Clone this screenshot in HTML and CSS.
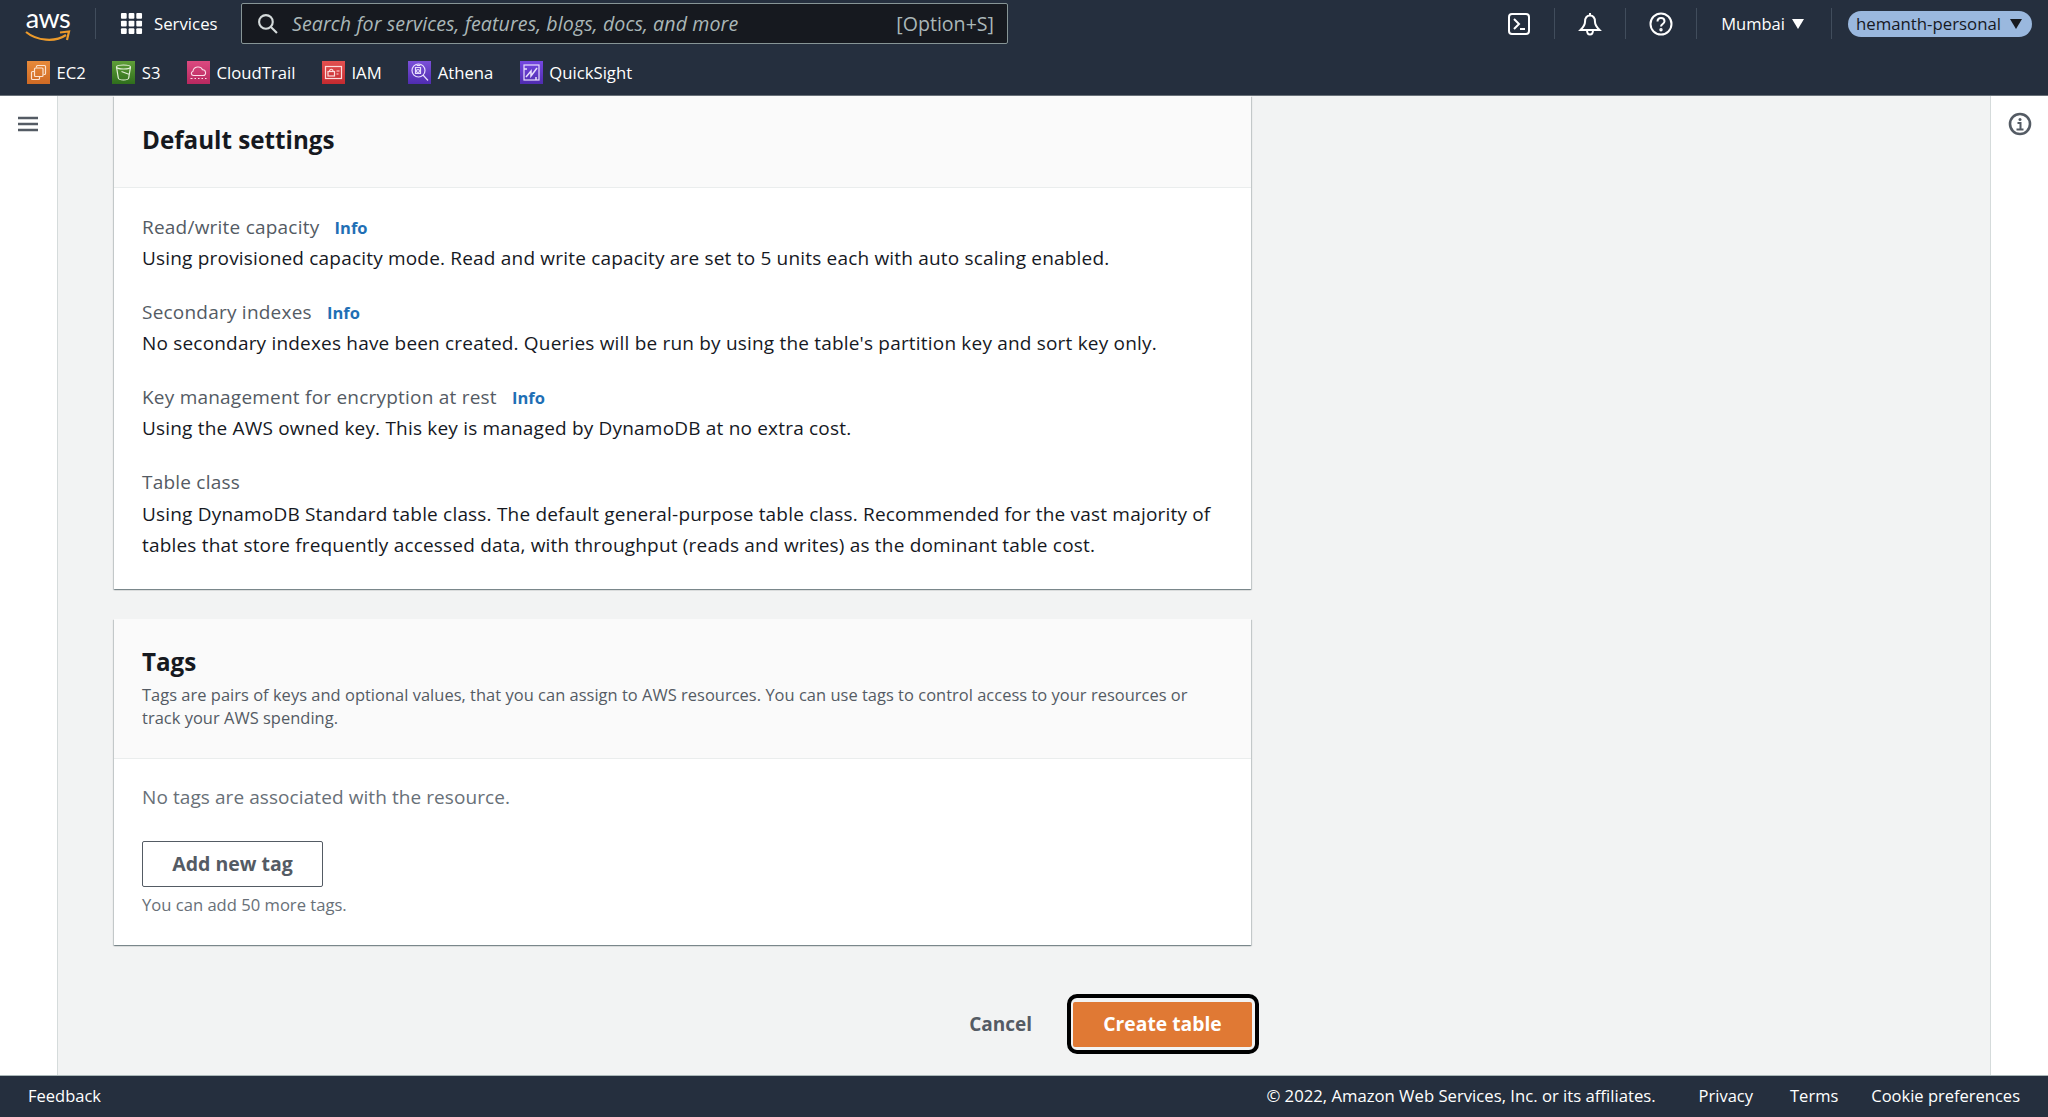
FILE: index.html
```html
<!DOCTYPE html>
<html lang="en">
<head>
<meta charset="utf-8">
<title>Create table</title>
<link rel="stylesheet" href="styles.css">
</head>
<body>
<header class="top">
  <div class="bar">
    <div class="logo"><span class="logo-text">aws</span>
      <svg class="smile" viewBox="0 0 46 14" width="46" height="14"><path d="M1 2C12 11 30 12.500 41 5" fill="none" stroke="#ec9a2b" stroke-width="2.200"/><path d="M35 2.500L44 1.500L42 10" fill="none" stroke="#ec9a2b" stroke-width="2.200"/></svg>
    </div>
    <span class="sep logo-sep"></span>
    <svg class="grid-ic" viewBox="0 0 24 24" width="23" height="23" fill="#fff"><rect x="1" y="1" width="6" height="6" rx="1"/><rect x="9" y="1" width="6" height="6" rx="1"/><rect x="17" y="1" width="6" height="6" rx="1"/><rect x="1" y="9" width="6" height="6" rx="1"/><rect x="9" y="9" width="6" height="6" rx="1"/><rect x="17" y="9" width="6" height="6" rx="1"/><rect x="1" y="17" width="6" height="6" rx="1"/><rect x="9" y="17" width="6" height="6" rx="1"/><rect x="17" y="17" width="6" height="6" rx="1"/></svg>
    <span class="services">Services</span>
    <div class="search">
      <svg viewBox="0 0 20 20" width="21" height="21" fill="none" stroke="#d5dbdb" stroke-width="2"><circle cx="8.5" cy="8.5" r="6.5"/><path d="M13 13l6 6"/></svg>
      <span class="search-text">Search for services, features, blogs, docs, and more</span>
      <span class="shortcut">[Option+S]</span>
    </div>
    <div class="tools">
      <span class="tool"><svg viewBox="0 0 24 24" width="24" height="24" fill="none" stroke="#fff" stroke-width="2"><rect x="2" y="2" width="20" height="20" rx="3"/><path d="M7 7l5 5-5 5M13 17h5"/></svg></span>
      <span class="sep"></span>
      <span class="tool"><svg viewBox="0 0 24 24" width="24" height="24" fill="none" stroke="#fff" stroke-width="2"><path d="M12 3.500c-3.500 0-5 3-5 6.500 0 3.500-2 5.500-4.500 8h19c-2.500-2.500-4.500-4.500-4.500-8 0-3.500-1.500-6.500-5-6.500zM12 1v2.500M9 18c0 3 1.500 4.500 3 4.500s3-1.500 3-4.500"/></svg></span>
      <span class="sep"></span>
      <span class="tool"><svg viewBox="0 0 24 24" width="24" height="24" fill="none" stroke="#fff" stroke-width="2"><circle cx="12" cy="12" r="10.500"/><path d="M8.500 9.500c0-2 1.500-3.500 3.500-3.500s3.500 1.300 3.500 3.300c0 2.700-3.500 2.700-3.500 5.200"/><circle cx="12" cy="17.800" r=".7"/></svg></span>
      <span class="sep"></span>
      <span class="region">Mumbai <i class="caret"></i></span>
      <span class="sep"></span>
      <span class="account">hemanth-personal <i class="caret dark"></i></span>
    </div>
  </div>
  <nav class="favs">
    <a class="fav"><span class="svc orange"><svg viewBox="0 0 23 23" fill="none" stroke="#fbe3d0" stroke-width="1.200"><path d="M9.500 6.500V5.500a1 1 0 0 1 1-1h7a1 1 0 0 1 1 1v7a1 1 0 0 1-1 1h-1"/><rect x="7.500" y="7" width="8.500" height="8.500" rx="1"/><path d="M7.500 10.500h-2a1 1 0 0 0-1 1v6a1 1 0 0 0 1 1h6a1 1 0 0 0 1-1v-2"/></svg></span>EC2</a>
    <a class="fav"><span class="svc green"><svg viewBox="0 0 23 23" fill="none" stroke="#e3f0d8" stroke-width="1.200"><ellipse cx="11.500" cy="6" rx="7" ry="2"/><path d="M4.500 6l1.800 11c.3 1.500 2.500 2 5.200 2s4.900-.5 5.200-2l1.800-11M9.500 10.500l8 3"/></svg></span>S3</a>
    <a class="fav"><span class="svc pink"><svg viewBox="0 0 23 23" fill="none" stroke="#fbdde8" stroke-width="1.100"><path d="M6.500 14.500c-2.500 0-3-3.500-.5-4.300.5-4.500 7.500-6 9.500-1.500 3.500-.3 4.500 5.800.5 5.800z"/><path d="M3.500 17.500h2M7.500 17.500h1.500M11 17.500h1.500M14.500 17.500h1.500M18 17.500h1.500"/></svg></span>CloudTrail</a>
    <a class="fav"><span class="svc red"><svg viewBox="0 0 23 23" fill="none" stroke="#fbdcdc" stroke-width="1.200"><rect x="3.500" y="5.500" width="16" height="12"/><rect x="6" y="10.500" width="6.500" height="4.500"/><path d="M7.500 10.500c0-3 3.500-3 3.500 0M14.500 10h3M14.500 13h2"/></svg></span>IAM</a>
    <a class="fav"><span class="svc purple"><svg viewBox="0 0 23 23" fill="none" stroke="#e8defc" stroke-width="1.200"><circle cx="10.500" cy="9.500" r="6.500"/><path d="M7.500 6.500h5v6h-5zM9 5c0-1 3-1 3 0M15 14l5 5.500"/><circle cx="10" cy="10" r="1.500"/></svg></span>Athena</a>
    <a class="fav"><span class="svc violet"><svg viewBox="0 0 23 23" fill="none" stroke="#e8defc" stroke-width="1.200"><rect x="4" y="4" width="15" height="15"/><path d="M6 16l5-6v5l6-8M4 8h3M16 19v-3" stroke-width="1.500"/></svg></span>QuickSight</a>
  </nav>
</header>
<div class="middle">
  <aside class="rail left">
    <svg viewBox="0 0 20 16" width="20" height="16" stroke="#545b64" stroke-width="2.400"><path d="M0 2h20M0 8h20M0 14h20"/></svg>
  </aside>
  <main class="content">
    <section class="card first">
      <div class="card-head plain"><h2>Default settings</h2></div>
      <div class="card-body settings">
        <div class="item"><div class="label">Read/write capacity <a class="info">Info</a></div><p>Using provisioned capacity mode. Read and write capacity are set to 5 units each with auto scaling enabled.</p></div>
        <div class="item"><div class="label">Secondary indexes <a class="info">Info</a></div><p>No secondary indexes have been created. Queries will be run by using the table's partition key and sort key only.</p></div>
        <div class="item"><div class="label">Key management for encryption at rest <a class="info">Info</a></div><p>Using the AWS owned key. This key is managed by DynamoDB at no extra cost.</p></div>
        <div class="item"><div class="label">Table class</div><p>Using DynamoDB Standard table class. The default general-purpose table class. Recommended for the vast majority of tables that store frequently accessed data, with throughput (reads and writes) as the dominant table cost.</p></div>
      </div>
    </section>
    <section class="card tags">
      <div class="card-head"><h2>Tags</h2><p class="desc">Tags are pairs of keys and optional values, that you can assign to AWS resources. You can use tags to control access to your resources or track your AWS spending.</p></div>
      <div class="card-body">
        <p class="empty">No tags are associated with the resource.</p>
        <button class="btn-outline">Add new tag</button>
        <p class="hint">You can add 50 more tags.</p>
      </div>
    </section>
    <div class="actions">
      <button class="btn-link">Cancel</button>
      <button class="btn-primary">Create table</button>
    </div>
  </main>
  <aside class="rail right">
    <svg viewBox="0 0 24 24" width="24" height="24" fill="none" stroke="#545b64" stroke-width="2.600"><circle cx="12" cy="12" r="10"/><circle cx="12" cy="7.500" r="1.500" fill="#545b64" stroke="none"/><path d="M9.500 11h3v6M8.500 17.500h7" stroke-width="2"/></svg>
  </aside>
</div>
<footer class="foot">
  <span class="feedback">Feedback</span>
  <span class="copy">© 2022, Amazon Web Services, Inc. or its affiliates.</span>
  <span class="flink first-link">Privacy</span>
  <span class="flink">Terms</span>
  <span class="flink last-link">Cookie preferences</span>
</footer>
</body>
</html>
```
FILE: styles.css
```css
* { box-sizing: border-box; }
html { height: 1117px; overflow: hidden; }
body { margin: 0; height: 1117px; overflow: hidden; display: flex; flex-direction: column; background: #f2f3f3; font-family: "Open Sans", "Noto Sans", sans-serif; color: #16191f; }
p, h2 { margin: 0; }
.top { background: #252f3e; height: 96px; flex: none; border-bottom: 1px solid #687078; color: #fff; }
.bar { height: 47px; display: flex; align-items: center; padding-left: 24px; font-size: 16.500px; }
.logo { width: 48px; height: 36px; position: relative; margin-right: 23px; }
.logo-text { font: 400 27px/24px "Lato", sans-serif; display: block; text-align: center; letter-spacing: -.5px; }
.smile { position: absolute; left: 1px; top: 24px; }
.sep { width: 1px; height: 31px; background: #414d5c; flex: none; }
.logo-sep { margin-right: 24px; }
.grid-ic { margin-right: 11px; }
.services { margin-right: 24px; width: 63px; white-space: nowrap; font-size: 16.800px; }
.search { width: 767px; height: 41px; background: #16191f; border: 1px solid #879596; border-radius: 2px; display: flex; align-items: center; padding: 0 13px 0 15px; }
.search-text { font-style: italic; color: #aab7b8; font-size: 19.600px; letter-spacing: .1px; margin-left: 14px; flex: 1; }
.shortcut { color: #aab7b8; font-size: 19.600px; }
.tools { margin-left: auto; display: flex; align-items: center; padding-right: 16px; }
.tool { width: 70px; height: 30px; display: flex; align-items: center; justify-content: center; }
.region { padding: 0 27px 0 24px; display: flex; align-items: center; gap: 7px; }
.caret { width: 0; height: 0; border: 6px solid transparent; border-top: 10px solid #fff; border-bottom: 0; }
.caret.dark { border-top-color: #16191f; }
.account { margin-left: 16px; background: #9ab8de; color: #16191f; border-radius: 13px; height: 26px; padding: 0 10px 0 8px; display: flex; align-items: center; gap: 9px; font-size: 16.800px; }
.favs { height: 48px; display: flex; align-items: center; padding: 3px 0 0 27px; gap: 26.500px; font-size: 16.700px; }
.fav { display: flex; align-items: center; gap: 6.500px; }
.svc { width: 23px; height: 23px; display: block; flex: none; }
.svc svg { display: block; width: 23px; height: 23px; }
.orange { background: linear-gradient(0deg, #cf6a24, #e88a3a); }
.green { background: linear-gradient(0deg, #2f6e1c, #5f9e38); }
.pink { background: linear-gradient(0deg, #b8285f, #dc4a80); }
.red { background: linear-gradient(0deg, #c42a2f, #e25050); }
.purple { background: linear-gradient(0deg, #4f2cb0, #7b50d8); }
.violet { background: linear-gradient(0deg, #4f2cb0, #7547e0); }
.middle { flex: 1; display: flex; min-height: 0; overflow: hidden; }
.rail { width: 58px; flex: none; background: #fff; display: flex; justify-content: center; padding-top: 20px; }
.rail.left { border-right: 1px solid #d5dbdb; padding-right: 2px; }
.rail.right { width: 58px; border-left: 1px solid #d5dbdb; padding-top: 16px; }
.rail svg { display: block; }
.content { flex: 1; padding-left: 56px; min-width: 0; }
.card { width: 1137px; background: #fff; box-shadow: 0 1px 1px 0 rgba(0,28,36,.3), 1px 1px 1px 0 rgba(0,28,36,.15), -1px 1px 1px 0 rgba(0,28,36,.15); }
.card-head { background: #fafafa; border-bottom: 1px solid #eaeded; padding: 28px 28px 29px; }
.card-head.plain { height: 92px; padding: 29px 28px 0; }
h2 { font-size: 24.200px; font-weight: 700; line-height: 30px; }
.settings { padding: 23.500px 28px 0; height: 401px; }
.item { margin-bottom: 22.700px; }
.label { color: #545b64; font-size: 19px; line-height: 31.300px; letter-spacing: .22px; }
.item p { font-size: 19px; line-height: 31.300px; letter-spacing: .19px; }
.info { color: #1f6fb5; font-weight: 700; font-size: 16.500px; line-height: 1; margin-left: 10px; letter-spacing: 0; }
.tags { margin-top: 30px; height: 326px; }
.desc { color: #545b64; font-size: 16.450px; line-height: 22.500px; margin-top: 7px; letter-spacing: .03px; }
.tags .card-body { padding: 23px 28px; }
.empty { color: #687078; font-size: 19px; line-height: 31px; letter-spacing: .08px; }
.btn-outline { display: block; margin-top: 28px; width: 181px; height: 46px; padding: 0 0 2px; background: #fff; border: 1.500px solid #545b64; border-radius: 2px; color: #545b64; font: 700 19.500px "Open Sans", sans-serif; }
.hint { color: #687078; font-size: 16.600px; line-height: 22px; margin-top: 7px; }
.actions { width: 1137px; margin-top: 57px; display: flex; justify-content: flex-end; align-items: center; }
.btn-link { background: none; border: 0; color: #545b64; font: 700 19px "Open Sans", sans-serif; margin-right: 41px; padding: 0 0 2px; }
.btn-primary { position: relative; width: 179px; height: 45px; padding: 0 0 2px; background: #e07934; color: #fff; border: 0; border-radius: 2px; font: 700 19.300px "Open Sans", sans-serif; margin-right: -1px; }
.btn-primary::after { content: ""; position: absolute; inset: -8px -7px -7px -6px; border: 4px solid #000; border-radius: 10px; }
.foot { height: 42px; flex: none; background: #252f3e; border-top: 1px solid #aab7b8; color: #fff; display: flex; align-items: center; padding: 0 28px 2px; font-size: 16.500px; }
.feedback { margin-right: auto; }
.copy { font-size: 16.700px; }
.flink { margin-left: 37px; }
.flink.first-link { margin-left: 43px; }
.flink.last-link { margin-left: 33px; }
```
